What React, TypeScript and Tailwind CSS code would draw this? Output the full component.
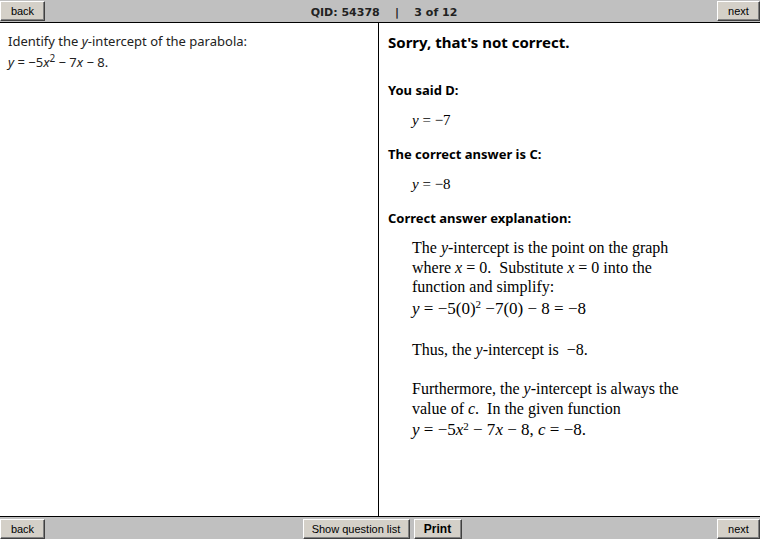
import React from 'react';

const btn =
  "h-[20px] bg-[#d4d0c8] border border-t-white border-l-white border-b-[#404040] border-r-[#404040] shadow-[inset_-1px_-1px_#808080] text-[11px] leading-none text-black font-['Liberation_Sans',sans-serif] whitespace-nowrap px-0";

const serif = "font-['Liberation_Serif',serif]";

// Italic variable in Times style
const V: React.FC<{ children: React.ReactNode }> = ({ children }) => (
  <i className="italic">{children}</i>
);

export default function App() {
  return (
    <div className="w-[760px] h-[539px] flex flex-col bg-white overflow-hidden">
      {/* Top bar */}
      <div className="h-[23px] shrink-0 bg-[#c0c0c0] border-b border-black flex items-start pt-[1px]">
        <button className={`${btn} w-[45px]`}>back</button>
        <div className="flex-1 text-center pt-[6px] pl-[6px] text-[11px] leading-none font-bold text-[#222] font-['DejaVu_Sans',sans-serif] whitespace-pre">
          {'QID: 54378    |    3 of 12'}
        </div>
        <button className={`${btn} w-[43px]`}>next</button>
      </div>

      {/* Main */}
      <div className="flex-1 flex min-h-0">
        <div className="w-[379px] border-r border-black pl-[8px] pt-[8px] text-[13px] leading-[21px] text-[#222] font-['Noto_Sans',sans-serif]">
          <div>
            Identify the <span className="italic">y</span>-intercept of the parabola:
          </div>
          <div>
            <span className="italic">y</span> = −5<span className="italic">x</span>
            <sup className="text-[10px]">2</sup> − 7<span className="italic">x</span> − 8.
          </div>
        </div>

        <div className="flex-1 pl-[9px] pt-[8px] text-black font-['Noto_Sans',sans-serif]">
          <div className="text-[15px] font-bold leading-[22px]">Sorry, that's not correct.</div>

          <div className="mt-[28px] text-[13px] font-bold leading-[18px]">You said D:</div>
          <div className={`${serif} text-[15px] leading-[20px] mt-[11px] pl-[24px]`}>
            <V>y</V> = −7
          </div>

          <div className="mt-[15px] text-[13px] font-bold leading-[18px]">The correct answer is C:</div>
          <div className={`${serif} text-[15px] leading-[20px] mt-[11px] pl-[24px]`}>
            <V>y</V> = −8
          </div>

          <div className="mt-[15px] text-[13px] font-bold leading-[18px]">Correct answer explanation:</div>

          <div className={`${serif} text-[16px] leading-[19.5px] mt-[11px] pl-[24px]`}>
            <div>The <V>y</V>-intercept is the point on the graph</div>
            <div>where <V>x</V> = 0.&nbsp; Substitute <V>x</V> = 0 into the</div>
            <div>function and simplify:</div>
            <div className="text-[17px] leading-[24px]">
              <V>y</V> = −5(0)<sup className="text-[11px]">2</sup> −7(0) − 8 = −8
            </div>
            <div className="mt-[19px]">
              Thus, the <V>y</V>-intercept is &nbsp;−8.
            </div>
            <div className="mt-[20px]">Furthermore, the <V>y</V>-intercept is always the</div>
            <div>value of <V>c</V>.&nbsp; In the given function</div>
            <div className="text-[17px] leading-[24px]">
              <V>y</V> = −5<V>x</V>
              <sup className="text-[11px]">2</sup> − 7<V>x</V> − 8, <V>c</V> = −8.
            </div>
          </div>
        </div>
      </div>

      {/* Bottom bar */}
      <div className="h-[23px] shrink-0 bg-[#c0c0c0] border-t border-black flex items-start pt-[2px]">
        <button className={`${btn} w-[45px]`}>back</button>
        <div className="flex-1 flex justify-center gap-[4px] pl-[2px]">
          <button className={`${btn} w-[107px]`}>Show question list</button>
          <button className={`${btn} w-[48px] font-bold text-[12px]`}>Print</button>
        </div>
        <button className={`${btn} w-[43px]`}>next</button>
      </div>
    </div>
  );
}
